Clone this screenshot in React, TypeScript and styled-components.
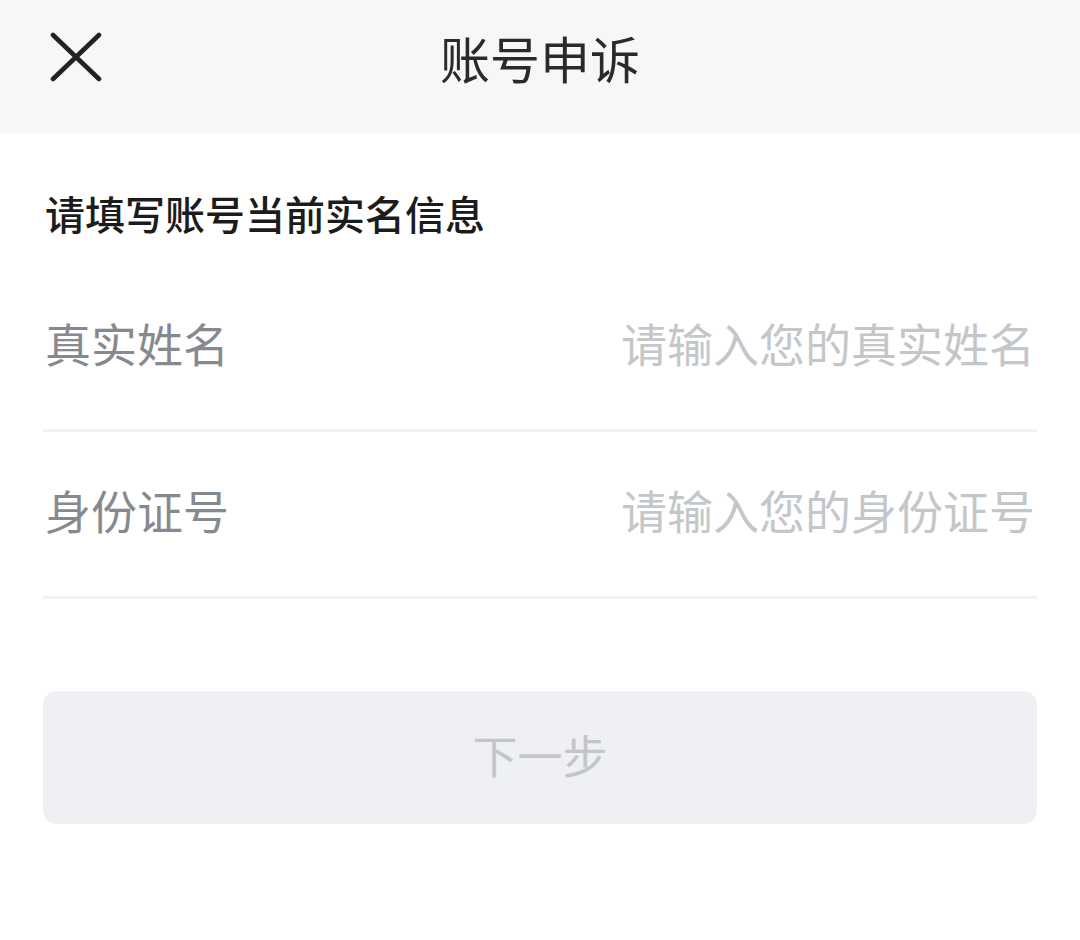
import React from "react";
import styled, { createGlobalStyle } from "styled-components";

const Global = createGlobalStyle`
  html, body { margin: 0; padding: 0; background: #ffffff; }
  body { font-family: "Noto Sans CJK SC", "Noto Sans", sans-serif; }
  * { box-sizing: border-box; }
`;

const Page = styled.div`
  width: 1080px;
  min-height: 940px;
  background: #ffffff;
  display: flex;
  flex-direction: column;
`;

const Header = styled.header`
  height: 133px;
  background: #f7f7f7;
  display: grid;
  grid-template-columns: 140px 1fr 140px;
  align-items: center;
  padding-bottom: 20px;
`;

const CloseButton = styled.button`
  border: none;
  background: transparent;
  padding: 0 0 0 50px;
  margin: 0;
  width: 140px;
  height: 60px;
  display: flex;
  align-items: center;
  cursor: pointer;
`;

const Title = styled.h1`
  margin: 0;
  text-align: center;
  font-size: 50px;
  line-height: 50px;
  font-weight: 400;
  color: #2a2a2a;
  letter-spacing: 0;
`;

const Body = styled.main`
  padding: 0 43px;
  display: flex;
  flex-direction: column;
`;

const Subtitle = styled.h2`
  margin: 60px 0 32px 2px;
  font-size: 40px;
  line-height: 40px;
  font-weight: 500;
  color: #1c1c1c;
`;

const Row = styled.label`
  height: 167px;
  padding-bottom: 11px;
  display: flex;
  align-items: center;
  justify-content: space-between;
  border-bottom: 3px solid #f2f2f3;
`;

const Label = styled.span`
  font-size: 46px;
  line-height: 46px;
  color: #868a8f;
  padding-left: 2px;
  flex-shrink: 0;
`;

const Input = styled.input`
  flex: 1;
  min-width: 0;
  border: none;
  outline: none;
  background: transparent;
  text-align: right;
  font-family: "Noto Sans CJK SC", "Noto Sans", sans-serif;
  font-size: 46px;
  line-height: 46px;
  color: #333;
  padding: 0 2px 0 0;
  &::placeholder {
    color: #c4c7ca;
  }
`;

const NextButton = styled.button`
  margin-top: 92px;
  height: 133px;
  border: none;
  border-radius: 14px;
  background: #eff0f3;
  color: #c3c5c9;
  font-family: "Noto Sans CJK SC", "Noto Sans", sans-serif;
  font-size: 45px;
  line-height: 45px;
  display: flex;
  align-items: center;
  justify-content: center;
  padding-bottom: 7px;
`;

const CloseIcon = () => (
  <svg width="52" height="50" viewBox="0 0 52 50" fill="none">
    <path
      d="M3 3 L49 47 M49 3 L3 47"
      stroke="#222222"
      strokeWidth="4.6"
      strokeLinecap="round"
    />
  </svg>
);

export default function App() {
  return (
    <Page>
      <Global />
      <Header>
        <CloseButton aria-label="关闭">
          <CloseIcon />
        </CloseButton>
        <Title>账号申诉</Title>
        <div />
      </Header>
      <Body>
        <Subtitle>请填写账号当前实名信息</Subtitle>
        <Row>
          <Label>真实姓名</Label>
          <Input placeholder="请输入您的真实姓名" />
        </Row>
        <Row>
          <Label>身份证号</Label>
          <Input placeholder="请输入您的身份证号" />
        </Row>
        <NextButton disabled>下一步</NextButton>
      </Body>
    </Page>
  );
}
